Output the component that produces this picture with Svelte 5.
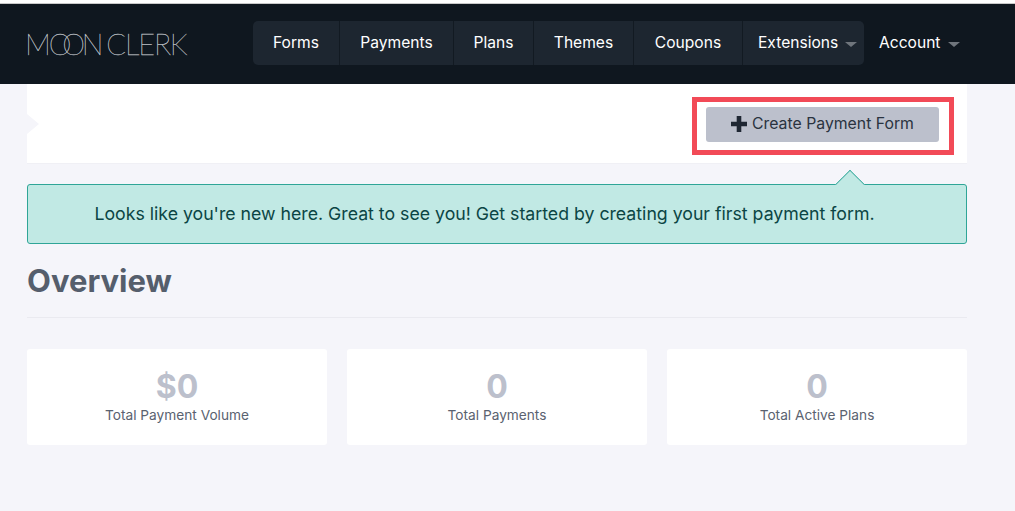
<script>
	const navItems = [
		{ label: 'Forms', width: 87 },
		{ label: 'Payments', width: 114 },
		{ label: 'Plans', width: 80 },
		{ label: 'Themes', width: 100 },
		{ label: 'Coupons', width: 109 }
	];

	const stats = [
		{ value: '$0', label: 'Total Payment Volume' },
		{ value: '0', label: 'Total Payments' },
		{ value: '0', label: 'Total Active Plans' }
	];
</script>

<div class="topstrip"></div>
<header class="topbar">
	<div class="logo">M<span class="o1">O</span><span class="o2">O</span><span class="n">N</span> <span class="clerk">CLERK</span></div>
	<nav class="nav">
		{#each navItems as item}
			<a class="nav-item" style="width: {item.width}px">{item.label}</a>
		{/each}
		<a class="nav-item extensions">Extensions <span class="caret"></span></a>
	</nav>
	<a class="account">Account <span class="caret"></span></a>
</header>

<main class="page">
	<section class="actions">
		<span class="notch"></span>
		<div class="highlight">
			<button class="create">
				<svg width="16" height="16" viewBox="0 0 16 16" aria-hidden="true">
					<path d="M5.700 0h4.600v5.700H16v4.600h-5.700V16H5.700v-5.700H0V5.700h5.700z" fill="#1f2733" />
				</svg>
				Create Payment Form
			</button>
		</div>
	</section>

	<div class="notice">
		<span class="arrow"></span>
		Looks like you're new here. Great to see you! Get started by creating your first payment form.
	</div>

	<h1 class="title">Overview</h1>

	<section class="stats">
		{#each stats as stat}
			<div class="card">
				<div class="value">{stat.value}</div>
				<div class="label">{stat.label}</div>
			</div>
		{/each}
	</section>
</main>

<style>
	:global(body) {
		background: #f5f5fa;
		font-family: Inter, "Liberation Sans", sans-serif;
	}

	.topstrip {
		height: 3px;
		background: #fff;
		border-bottom: 1px solid #c9c9c9;
	}

	.topbar {
		height: 80px;
		background: #0f171f;
		display: flex;
		align-items: center;
		padding: 0 0 2px 27px;
		box-sizing: border-box;
	}

	.logo {
		width: 226px;
		flex: none;
		box-sizing: border-box;
		margin-left: -2px;
		margin-right: 2px;
		color: #d5d8da;
		-webkit-text-stroke: 0.3px #b9bdc1;
		font-family: Lato, sans-serif;
		font-size: 29px;
		font-weight: 100;
		letter-spacing: -1.2px;
		white-space: nowrap;
	}

	.o1 {
		margin-left: -1px;
	}

	.o2 {
		margin-left: -8px;
	}

	.n {
		margin-left: -2px;
	}

	.clerk {
		margin-left: -3px;
	}

	.nav {
		display: flex;
		height: 44px;
		width: 611px;
		background: #1d2630;
		border-radius: 5px;
		overflow: hidden;
	}

	.nav-item {
		display: flex;
		align-items: center;
		justify-content: center;
		box-sizing: border-box;
		padding-bottom: 2px;
		border-right: 1px solid #121a22;
		color: #fff;
		font-size: 15.6px;
		white-space: nowrap;
	}

	.extensions {
		flex: 1;
		border-right: 0;
		justify-content: flex-start;
		padding-left: 15px;
		gap: 7px;
	}

	.account {
		margin-left: 15px;
		display: flex;
		align-items: center;
		gap: 8px;
		padding-bottom: 2px;
		color: #fff;
		font-size: 15.6px;
	}

	.caret {
		width: 0;
		height: 0;
		border-left: 6px solid transparent;
		border-right: 6px solid transparent;
		border-top: 5px solid #6f757c;
		margin-top: 4px;
	}

	.page {
		width: 940px;
		margin-left: 27px;
	}

	.actions {
		position: relative;
		height: 80px;
		background: #fff;
		display: flex;
		justify-content: flex-end;
		align-items: center;
		padding-right: 13px;
		border-bottom: 1px solid #f0f0f5;
		box-sizing: border-box;
	}

	.notch {
		position: absolute;
		left: 0;
		top: 30px;
		border-left: 12px solid #f5f5fa;
		border-top: 10px solid transparent;
		border-bottom: 10px solid transparent;
	}

	.highlight {
		border: 5px solid #f24a57;
		padding: 5px 10px 8px 9px;
		margin-top: 5px;
	}

	.create {
		display: flex;
		align-items: center;
		justify-content: center;
		gap: 5px;
		width: 233px;
		height: 35px;
		padding: 0 0 2px 0;
		border: 0;
		border-radius: 3px;
		background: #bcc0cc;
		color: #2a3340;
		font: 15.8px Inter, "Liberation Sans", sans-serif;
	}

	.notice {
		position: relative;
		margin-top: 20px;
		height: 60px;
		box-sizing: border-box;
		padding: 0 25px 2px 0;
		background: #c1e9e4;
		border: 1px solid #2fa597;
		border-radius: 3px;
		color: #0b4544;
		font-size: 17.72px;
		display: flex;
		align-items: center;
		justify-content: center;
	}

	.arrow {
		position: absolute;
		right: 105px;
		top: -11px;
		width: 21px;
		height: 21px;
		background: #c1e9e4;
		border-top: 1px solid #2fa597;
		border-left: 1px solid #2fa597;
		transform: rotate(45deg);
		clip-path: polygon(0 0, 100% 0, 0 100%);
	}

	.title {
		margin: 17px 0 0;
		padding-bottom: 16px;
		border-bottom: 1px solid #eaeaf0;
		color: #555e6c;
		font-size: 31px;
		font-weight: 700;
		line-height: 40px;
	}

	.stats {
		display: grid;
		grid-template-columns: repeat(3, 300px);
		gap: 20px;
		margin-top: 31px;
	}

	.card {
		height: 96px;
		background: #fff;
		border-radius: 3px;
		text-align: center;
		padding-top: 20px;
		box-sizing: border-box;
	}

	.value {
		color: #bcc0cc;
		font-size: 32px;
		font-weight: 700;
		line-height: 36px;
	}

	.label {
		margin-top: 1px;
		color: #5a6270;
		font-size: 13.7px;
		line-height: 18px;
	}
</style>
